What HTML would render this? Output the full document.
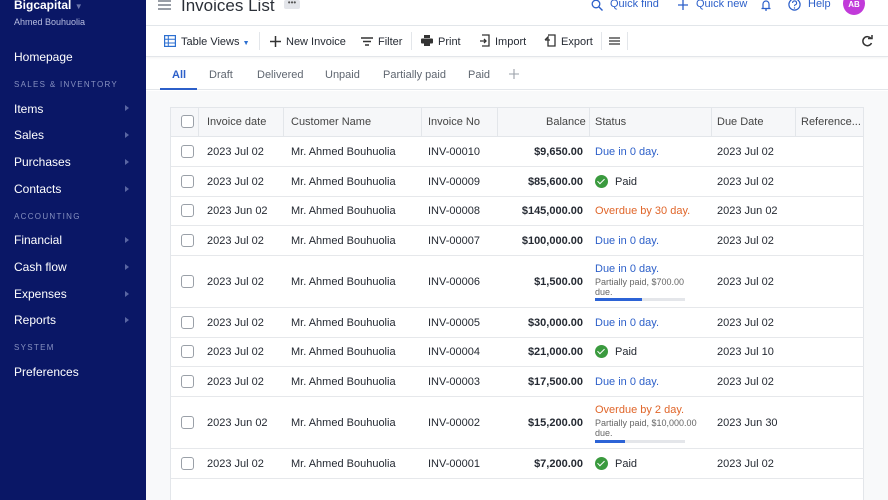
<!DOCTYPE html>
<html><head><meta charset="utf-8"><style>
*{box-sizing:border-box;margin:0;padding:0}
html,body{width:888px;height:500px;overflow:hidden}
body{font-family:"Liberation Sans",Arial,sans-serif;background:#fff;position:relative;color:#252a33}
.sb{position:absolute;left:0;top:0;width:146px;height:500px;background:#0a1766;color:#fff}
.sb .t{position:absolute;left:14px;font-size:12px}
.sb .h{position:absolute;left:14px;font-size:8px;letter-spacing:1.3px;color:#8791c0}
.sb .arr{position:absolute;left:125px;width:0;height:0;border-left:4px solid #5a66a3;border-top:3px solid transparent;border-bottom:3px solid transparent}
.a{position:absolute;white-space:nowrap}
.top{position:absolute;left:146px;top:0;width:742px;height:26px;border-bottom:1px solid #e3e6ea}
.tb{position:absolute;left:146px;top:26px;width:742px;height:31px;border-bottom:1px solid #e3e6ea;background:#fff;box-shadow:0 1px 2px rgba(0,0,0,.05)}
.tabs{position:absolute;left:146px;top:58px;width:742px;height:32px;border-bottom:1px solid #e3e6ea}
.main{position:absolute;left:146px;top:91px;width:742px;height:409px;background:#f8f9fa}
.tbl{position:absolute;left:170px;top:107px;width:694px;height:393px;background:#fff;border:1px solid #e3e6ea;border-bottom:none}
.hd{position:absolute;left:170px;top:107px;width:694px;height:30px;background:#f6f7f9;border:1px solid #e3e6ea}
.vl{position:absolute;top:108px;width:1px;height:29px;background:#e3e6ea}
.hl{position:absolute;left:171px;width:693px;height:1px;background:#e6e8eb}
.cb{position:absolute;left:181px;width:13px;height:13px;border:1px solid #9aa0a8;border-radius:3px;background:#fff}
.f{font-size:11px}
.bl{color:#2c5fc9}.or{color:#e0662a}
.sub{font-size:9px;color:#666}
.bar{position:absolute;left:595px;width:90px;height:3px;background:#e4e6ea}
.bar i{display:block;height:3px;background:#2c63d6}
.ok{position:absolute;left:595px;width:13px;height:13px;border-radius:50%;background:#3a9a3e}
.ok:after{content:"";position:absolute;left:4px;top:2px;width:3px;height:6px;border:solid #fff;border-width:0 1.6px 1.6px 0;transform:rotate(45deg)}
</style></head><body>
<div class="sb">
<div class="t" style="top:-2px;font-weight:bold;font-size:12px">Bigcapital <span style="color:#6a74ab;font-size:8px">▼</span></div>
<div class="t" style="top:17px;font-size:9px;color:#b7bde0">Ahmed Bouhuolia</div>
<div class="t" style="top:50px">Homepage</div>
<div class="h" style="top:80px">SALES &amp; INVENTORY</div>
<div class="t" style="top:102px">Items</div><div class="arr" style="top:105px"></div>
<div class="t" style="top:128px">Sales</div><div class="arr" style="top:132px"></div>
<div class="t" style="top:155px">Purchases</div><div class="arr" style="top:159px"></div>
<div class="t" style="top:182px">Contacts</div><div class="arr" style="top:186px"></div>
<div class="h" style="top:212px">ACCOUNTING</div>
<div class="t" style="top:233px">Financial</div><div class="arr" style="top:237px"></div>
<div class="t" style="top:260px">Cash flow</div><div class="arr" style="top:264px"></div>
<div class="t" style="top:287px">Expenses</div><div class="arr" style="top:291px"></div>
<div class="t" style="top:313px">Reports</div><div class="arr" style="top:317px"></div>
<div class="h" style="top:343px">SYSTEM</div>
<div class="t" style="top:365px">Preferences</div>
</div>
<div class="top"></div>
<svg class="a" style="left:158px;top:0" width="13" height="10"><path d="M0 1h13M0 5h13M0 9h13" stroke="#5c6470" stroke-width="1.3"/></svg>
<div class="a" style="left:181px;top:-4px;font-size:17px;color:#2b3038">Invoices List</div>
<div class="a" style="left:284px;top:0;width:16px;height:9px;background:#e3e5ea;border-radius:2px;font-size:8px;color:#555;text-align:center;line-height:6px">•••</div>
<svg class="a" style="left:591px;top:-1px" width="12" height="12"><circle cx="5" cy="5" r="3.8" stroke="#2c5fc9" stroke-width="1.3" fill="none"/><path d="M8 8l3.5 3.5" stroke="#2c5fc9" stroke-width="1.4"/></svg>
<div class="a f bl" style="left:610px;top:-2px">Quick find</div>
<svg class="a" style="left:678px;top:0" width="10" height="10"><path d="M5 0v10M0 5h10" stroke="#2c5fc9" stroke-width="1.3"/></svg>
<div class="a f bl" style="left:696px;top:-2px">Quick new</div>
<svg class="a" style="left:760px;top:-1px" width="12" height="12"><path d="M1.5 9.5h9M3 9.5V5a3 3 0 0 1 6 0v4.5M5 11h2" stroke="#2c5fc9" fill="none" stroke-width="1.2"/></svg>
<svg class="a" style="left:788px;top:-2px" width="13" height="13"><circle cx="6.5" cy="6.5" r="5.6" stroke="#2c5fc9" stroke-width="1.2" fill="none"/><path d="M4.6 5a2 2 0 1 1 2.5 1.9c-.5.2-.6.6-.6 1.2" stroke="#2c5fc9" stroke-width="1.1" fill="none"/><circle cx="6.5" cy="10" r=".7" fill="#2c5fc9"/></svg>
<div class="a f bl" style="left:808px;top:-2px">Help</div>
<div class="a" style="left:843px;top:-8px;width:22px;height:23px;border-radius:50%;background:#c13ad9;color:#fff;font-size:8px;text-align:center;line-height:26px;font-weight:bold">AB</div>
<div class="tb"></div>
<svg class="a" style="left:164px;top:35px" width="12" height="12"><rect x=".6" y=".6" width="10.8" height="10.8" fill="none" stroke="#2c6fd0" stroke-width="1.2"/><path d="M.6 4.3h10.8M.6 8h10.8M4.3.6v10.8" stroke="#2c6fd0" stroke-width="1"/></svg>
<div class="a f" style="left:181px;top:36px">Table Views <span style="color:#2c6fd0;font-size:7px">▼</span></div>
<div class="a" style="left:259px;top:32px;width:1px;height:18px;background:#e3e6ea"></div>
<svg class="a" style="left:270px;top:36px" width="11" height="11"><path d="M5.5 0v11M0 5.5h11" stroke="#333" stroke-width="1.5"/></svg>
<div class="a f" style="left:286px;top:36px">New Invoice</div>
<svg class="a" style="left:361px;top:37px" width="12" height="9"><path d="M0 1h12M2 4.5h8M4 8h4" stroke="#333" stroke-width="1.4"/></svg>
<div class="a f" style="left:378px;top:36px">Filter</div>
<div class="a" style="left:411px;top:32px;width:1px;height:18px;background:#e3e6ea"></div>
<svg class="a" style="left:421px;top:35px" width="12" height="12"><rect x="3" y="0" width="6" height="3" fill="#333"/><rect x="0" y="3.5" width="12" height="5" rx="1" fill="#333"/><rect x="3" y="8" width="6" height="3" fill="#333"/></svg>
<div class="a f" style="left:438px;top:36px">Print</div>
<svg class="a" style="left:479px;top:34px" width="12" height="13"><path d="M3 1h7v11H3M1 7h6M5 5l2 2-2 2" stroke="#333" fill="none" stroke-width="1.3"/></svg>
<div class="a f" style="left:495px;top:36px">Import</div>
<svg class="a" style="left:544px;top:34px" width="12" height="13"><path d="M4 1h7v11H4V9M1 6l3-3v6M1 6h5" stroke="#333" fill="none" stroke-width="1.3"/></svg>
<div class="a f" style="left:561px;top:36px">Export</div>
<div class="a" style="left:601px;top:32px;width:1px;height:18px;background:#e3e6ea"></div>
<svg class="a" style="left:609px;top:37px" width="11" height="9"><path d="M0 1h11M0 4h11M0 7h11" stroke="#333" stroke-width="1.3"/></svg>
<div class="a" style="left:627px;top:32px;width:1px;height:18px;background:#e3e6ea"></div>
<svg class="a" style="left:861px;top:35px" width="12" height="12"><path d="M10 3.5A4.5 4.5 0 1 0 10.5 8" stroke="#333" fill="none" stroke-width="1.5"/><path d="M7 3.5h4V0" stroke="#333" fill="none" stroke-width="1.5"/></svg>
<div class="tabs"></div>
<div class="a f" style="left:172px;top:69px;color:#2c5fc9;font-weight:bold">All</div>
<div class="a" style="left:160px;top:88px;width:37px;height:2px;background:#2c5fc9"></div>
<div class="a f" style="left:209px;top:69px;color:#5f6670">Draft</div>
<div class="a f" style="left:257px;top:69px;color:#5f6670">Delivered</div>
<div class="a f" style="left:325px;top:69px;color:#5f6670">Unpaid</div>
<div class="a f" style="left:383px;top:69px;color:#5f6670">Partially paid</div>
<div class="a f" style="left:468px;top:69px;color:#5f6670">Paid</div>
<svg class="a" style="left:509px;top:69px" width="10" height="10"><path d="M5 0v10M0 5h10" stroke="#9aa0a8" stroke-width="1.1"/></svg>
<div class="main"></div>
<div class="tbl"></div>
<div class="hd"></div>
<div class="vl" style="left:198px"></div><div class="vl" style="left:283px"></div><div class="vl" style="left:421px"></div><div class="vl" style="left:497px"></div><div class="vl" style="left:589px"></div><div class="vl" style="left:711px"></div><div class="vl" style="left:795px"></div>
<div class="cb" style="top:115px"></div>
<div class="a f" style="left:207px;top:116px;color:#444">Invoice date</div>
<div class="a f" style="left:291px;top:116px;color:#444">Customer Name</div>
<div class="a f" style="left:428px;top:116px;color:#444">Invoice No</div>
<div class="a f" style="left:546px;top:116px;color:#444">Balance</div>
<div class="a f" style="left:595px;top:116px;color:#444">Status</div>
<div class="a f" style="left:717px;top:116px;color:#444">Due Date</div>
<div class="a f" style="left:801px;top:116px;color:#444">Reference...</div>

<div class="hl" style="top:166px"></div><div class="hl" style="top:196px"></div><div class="hl" style="top:225px"></div><div class="hl" style="top:255px"></div><div class="hl" style="top:307px"></div><div class="hl" style="top:337px"></div><div class="hl" style="top:366px"></div><div class="hl" style="top:396px"></div><div class="hl" style="top:448px"></div><div class="hl" style="top:478px"></div>

<div class="cb" style="top:145px"></div><div class="a f" style="left:207px;top:146px">2023 Jul 02</div><div class="a f" style="left:291px;top:146px">Mr. Ahmed Bouhuolia</div><div class="a f" style="left:428px;top:146px">INV-00010</div><div class="a f" style="right:305px;top:146px;font-weight:bold">$9,650.00</div><div class="a f bl" style="left:595px;top:146px">Due in 0 day.</div><div class="a f" style="left:717px;top:146px">2023 Jul 02</div>

<div class="cb" style="top:175px"></div><div class="a f" style="left:207px;top:176px">2023 Jul 02</div><div class="a f" style="left:291px;top:176px">Mr. Ahmed Bouhuolia</div><div class="a f" style="left:428px;top:176px">INV-00009</div><div class="a f" style="right:305px;top:176px;font-weight:bold">$85,600.00</div><div class="ok" style="top:175px"></div><div class="a f" style="left:615px;top:176px">Paid</div><div class="a f" style="left:717px;top:176px">2023 Jul 02</div>

<div class="cb" style="top:204px"></div><div class="a f" style="left:207px;top:205px">2023 Jun 02</div><div class="a f" style="left:291px;top:205px">Mr. Ahmed Bouhuolia</div><div class="a f" style="left:428px;top:205px">INV-00008</div><div class="a f" style="right:305px;top:205px;font-weight:bold">$145,000.00</div><div class="a f or" style="left:595px;top:205px">Overdue by 30 day.</div><div class="a f" style="left:717px;top:205px">2023 Jun 02</div>

<div class="cb" style="top:234px"></div><div class="a f" style="left:207px;top:235px">2023 Jul 02</div><div class="a f" style="left:291px;top:235px">Mr. Ahmed Bouhuolia</div><div class="a f" style="left:428px;top:235px">INV-00007</div><div class="a f" style="right:305px;top:235px;font-weight:bold">$100,000.00</div><div class="a f bl" style="left:595px;top:235px">Due in 0 day.</div><div class="a f" style="left:717px;top:235px">2023 Jul 02</div>

<div class="cb" style="top:275px"></div><div class="a f" style="left:207px;top:276px">2023 Jul 02</div><div class="a f" style="left:291px;top:276px">Mr. Ahmed Bouhuolia</div><div class="a f" style="left:428px;top:276px">INV-00006</div><div class="a f" style="right:305px;top:276px;font-weight:bold">$1,500.00</div><div class="a f bl" style="left:595px;top:263px">Due in 0 day.</div><div class="a sub" style="left:595px;top:277px;line-height:10px">Partially paid, $700.00<br>due.</div><div class="bar" style="top:298px"><i style="width:47px"></i></div><div class="a f" style="left:717px;top:276px">2023 Jul 02</div>

<div class="cb" style="top:316px"></div><div class="a f" style="left:207px;top:317px">2023 Jul 02</div><div class="a f" style="left:291px;top:317px">Mr. Ahmed Bouhuolia</div><div class="a f" style="left:428px;top:317px">INV-00005</div><div class="a f" style="right:305px;top:317px;font-weight:bold">$30,000.00</div><div class="a f bl" style="left:595px;top:317px">Due in 0 day.</div><div class="a f" style="left:717px;top:317px">2023 Jul 02</div>

<div class="cb" style="top:345px"></div><div class="a f" style="left:207px;top:346px">2023 Jul 02</div><div class="a f" style="left:291px;top:346px">Mr. Ahmed Bouhuolia</div><div class="a f" style="left:428px;top:346px">INV-00004</div><div class="a f" style="right:305px;top:346px;font-weight:bold">$21,000.00</div><div class="ok" style="top:345px"></div><div class="a f" style="left:615px;top:346px">Paid</div><div class="a f" style="left:717px;top:346px">2023 Jul 10</div>

<div class="cb" style="top:375px"></div><div class="a f" style="left:207px;top:376px">2023 Jul 02</div><div class="a f" style="left:291px;top:376px">Mr. Ahmed Bouhuolia</div><div class="a f" style="left:428px;top:376px">INV-00003</div><div class="a f" style="right:305px;top:376px;font-weight:bold">$17,500.00</div><div class="a f bl" style="left:595px;top:376px">Due in 0 day.</div><div class="a f" style="left:717px;top:376px">2023 Jul 02</div>

<div class="cb" style="top:416px"></div><div class="a f" style="left:207px;top:417px">2023 Jun 02</div><div class="a f" style="left:291px;top:417px">Mr. Ahmed Bouhuolia</div><div class="a f" style="left:428px;top:417px">INV-00002</div><div class="a f" style="right:305px;top:417px;font-weight:bold">$15,200.00</div><div class="a f or" style="left:595px;top:404px">Overdue by 2 day.</div><div class="a sub" style="left:595px;top:418px;line-height:10px">Partially paid, $10,000.00<br>due.</div><div class="bar" style="top:440px"><i style="width:30px"></i></div><div class="a f" style="left:717px;top:417px">2023 Jun 30</div>

<div class="cb" style="top:457px"></div><div class="a f" style="left:207px;top:458px">2023 Jul 02</div><div class="a f" style="left:291px;top:458px">Mr. Ahmed Bouhuolia</div><div class="a f" style="left:428px;top:458px">INV-00001</div><div class="a f" style="right:305px;top:458px;font-weight:bold">$7,200.00</div><div class="ok" style="top:457px"></div><div class="a f" style="left:615px;top:458px">Paid</div><div class="a f" style="left:717px;top:458px">2023 Jul 02</div>
</body></html>
